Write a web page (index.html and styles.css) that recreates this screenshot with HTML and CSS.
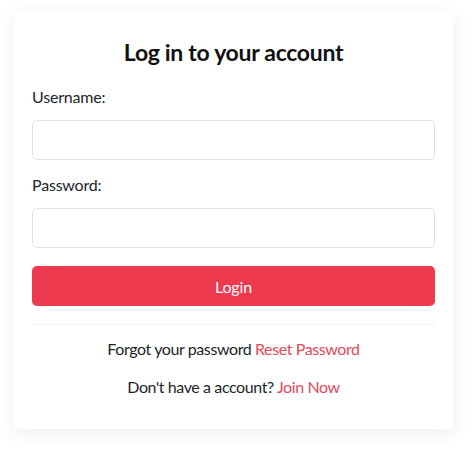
FILE: index.html
```html
<!DOCTYPE html>
<html lang="en">
<head>
    <meta charset="UTF-8">
    <meta name="viewport" content="width=device-width, initial-scale=1.0">
    <title>Log in</title>
    <link rel="stylesheet" href="styles.css">
</head>
<body>

    <div class="card">
        <h1>Log in to your account</h1>
        <form class="login-form" onsubmit="return false">
            <label for="username">Username:</label>
            <input type="text" id="username">
            <label for="password" class="second">Password:</label>
            <input type="password" id="password">
            <button type="submit">Login</button>
        </form>
        <hr>
        <p class="links">Forgot your password <a href="#">Reset Password</a></p>
        <p class="links">Don't have a account? <a href="#">Join Now</a></p>
    </div>

</body>
</html>
```

FILE: styles.css
```css
body {
    margin: 0;
    padding: 12px 21px 19px 14px;
    font-family: Lato, "Open Sans", sans-serif;
    color: #212529;
    background-color: #fff;
}

.card {
    padding: 25px 18px 30px;
    border-radius: 6px;
    background-color: #fff;
    box-shadow: 0 4px 18px rgba(30, 40, 80, 0.08);
}

h1 {
    margin: 0 0 18px;
    font-size: 23px;
    line-height: 30px;
    font-weight: 700;
    text-align: center;
    color: #111;
    letter-spacing: -0.3px;
}

.login-form {
    display: flex;
    flex-direction: column;
}

label {
    font-size: 16px;
    line-height: 24px;
    margin-bottom: 11px;
    letter-spacing: -0.2px;
}

label.second {
    margin-top: 13px;
}

input {
    height: 40px;
    box-sizing: border-box;
    border: 1px solid #dcdfe3;
    border-radius: 6px;
    font-size: 16px;
    padding: 6px 12px;
}

button {
    height: 40px;
    margin-top: 18px;
    border: none;
    border-radius: 5px;
    background-color: #ee3a4f;
    color: #fff;
    font-family: inherit;
    font-size: 16px;
    letter-spacing: -0.2px;
    cursor: pointer;
}

hr {
    margin: 18px 0 12px;
    border: none;
    border-top: 1px solid #f0f1f3;
}

.links {
    margin: 0 0 14px;
    font-size: 16px;
    line-height: 24px;
    text-align: center;
    letter-spacing: -0.4px;
}

.links:last-child {
    margin-bottom: 0;
}

.links a {
    color: #e8475a;
    text-decoration: none;
}
```
